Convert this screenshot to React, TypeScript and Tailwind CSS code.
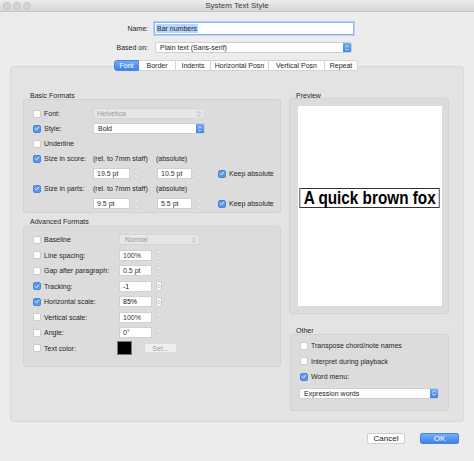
import React from 'react';

const font = "font-['Liberation_Sans',Arial,sans-serif]";

function Check({ on }: { on?: boolean }) {
  if (on) {
    return (
      <span className="shrink-0 w-[8px] h-[8px] rounded-[2px] bg-[#5b97ec] border border-[#4a84d6] flex items-center justify-center">
        <svg viewBox="0 0 8 8" className="w-[7px] h-[7px]">
          <path d="M1.6 4.1 L3.2 5.7 L6.4 2.1" fill="none" stroke="white" strokeWidth="1.2" strokeLinecap="round" strokeLinejoin="round" />
        </svg>
      </span>
    );
  }
  return <span className="shrink-0 w-[8px] h-[8px] rounded-[2px] bg-white border border-[#cbcbcb]" />;
}

function UpDown({ color }: { color: string }) {
  return (
    <svg viewBox="0 0 6 10" className="w-[6px] h-[10px]">
      <path d="M1.6 4 L3 2.6 L4.4 4 M1.6 6 L3 7.4 L4.4 6" fill="none" stroke={color} strokeWidth="0.8" strokeLinecap="round" strokeLinejoin="round" />
    </svg>
  );
}

function Stepper({ strong }: { strong?: boolean }) {
  return (
    <span className={'shrink-0 w-[6px] h-[10px] rounded-[2px] border flex items-center justify-center ' + (strong ? 'bg-white border-[#c9c9c9]' : 'bg-[#e6e6e6] border-[#d6d6d6]')}>
      <UpDown color={strong ? '#555' : '#a5a5a5'} />
    </span>
  );
}

function Select({ text, className, disabled }: { text: string; className: string; disabled?: boolean }) {
  if (disabled) {
    return (
      <div className={'h-[11px] rounded-[2px] bg-[#e6e6e6] border border-[#d5d5d5] flex items-center justify-between pl-[3px] pr-[2px] text-[#9b9b9b] ' + className}>
        <span>{text}</span>
        <UpDown color="#a8a8a8" />
      </div>
    );
  }
  return (
    <div className={'h-[11px] rounded-[2px] bg-white border border-[#cfcfcf] flex items-center justify-between pl-[4px] text-[#222] overflow-hidden ' + className}>
      <span>{text}</span>
      <span className="w-[8px] h-full bg-gradient-to-b from-[#6eaaf8] to-[#3f82ec] flex items-center justify-center">
        <UpDown color="#fff" />
      </span>
    </div>
  );
}

function Spin({ value, className, strong }: { value: string; className: string; strong?: boolean }) {
  return (
    <div className="flex items-center gap-[4px]">
      <div className={'h-[11px] bg-white border border-[#d0d0d0] flex items-center pl-[3px] ' + (strong ? 'text-[#111] ' : 'text-[#333] ') + className}>
        {value}
      </div>
      <Stepper strong={strong} />
    </div>
  );
}

function BasicRow({ on, label, children }: { on?: boolean; label: string; children?: React.ReactNode }) {
  return (
    <div className="flex items-center h-[15px]">
      <div className="w-[60px] flex items-center gap-[3px]">
        <Check on={on} />
        <span>{label}</span>
      </div>
      {children}
    </div>
  );
}

function SizeRow({ a, b }: { a: string; b: string }) {
  return (
    <div className="flex items-center h-[15px]">
      <div className="w-[60px]" />
      <div className="w-[64px]">
        <Spin value={a} className="w-[37px]" />
      </div>
      <div className="w-[61px]">
        <Spin value={b} className="w-[35px]" />
      </div>
      <div className="flex items-center gap-[3px]">
        <Check on />
        <span>Keep absolute</span>
      </div>
    </div>
  );
}

function Notes() {
  return (
    <>
      <div className="w-[63px]">(rel. to 7mm staff)</div>
      <div>(absolute)</div>
    </>
  );
}

function AdvRow({ on, label, children }: { on?: boolean; label: string; children?: React.ReactNode }) {
  return (
    <div className="flex items-center h-[15.5px]">
      <div className="w-[86px] flex items-center gap-[3px]">
        <Check on={on} />
        <span>{label}</span>
      </div>
      {children}
    </div>
  );
}

const tabs = [
  { name: 'Font', w: 'w-[25px]' },
  { name: 'Border', w: 'w-[37px]' },
  { name: 'Indents', w: 'w-[35px]' },
  { name: 'Horizontal Posn', w: 'w-[58px]' },
  { name: 'Vertical Posn', w: 'w-[56px]' },
  { name: 'Repeat', w: 'w-[33px]' },
];

export default function App() {
  return (
    <div className={`w-[474px] h-[461px] bg-[#ececec] flex flex-col overflow-hidden text-[7px] leading-none text-[#262626] ${font}`}>
      {/* title bar */}
      <div className="h-[12px] shrink-0 grid grid-cols-[1fr_auto_1fr] items-center bg-gradient-to-b from-[#ececec] to-[#d8d8d8] border-b border-[#c4c4c4]">
        <div className="flex items-center gap-[2px] pl-[3px]">
          <span className="w-[8px] h-[8px] rounded-full bg-[#d4d4d4] border border-[#c2c2c2]" />
          <span className="w-[8px] h-[8px] rounded-full bg-[#d4d4d4] border border-[#c2c2c2]" />
          <span className="w-[8px] h-[8px] rounded-full bg-[#d4d4d4] border border-[#c2c2c2]" />
        </div>
        <div className="text-[8px] text-[#3a3a3a]">System Text Style</div>
        <div />
      </div>

      {/* name */}
      <div className="mt-[10px] flex items-center h-[13px]">
        <div className="w-[148px] text-right">Name:</div>
        <div className="ml-[6px] w-[200px] h-[13px] bg-white border border-[#8db4ea] shadow-[0_0_0_1px_#b9d3f5] flex items-center pl-[1px]">
          <span className="bg-[#b8d5fb] px-[1px] py-[1px]">Bar numbers</span>
        </div>
      </div>

      {/* based on */}
      <div className="mt-[7px] flex items-center h-[11px]">
        <div className="w-[148px] text-right">Based on:</div>
        <Select text="Plain text (Sans-serif)" className="ml-[7px] w-[197px]" />
      </div>

      {/* tabs */}
      <div className="relative z-10 mt-[7px] ml-[114px] flex h-[11px]">
        {tabs.map((t, i) => (
          <div
            key={t.name}
            className={
              'h-[11px] flex items-center justify-center ' +
              t.w +
              (i === 0
                ? ' rounded-l-[3px] bg-gradient-to-b from-[#6fabf7] to-[#3f82ec] text-white border border-[#4a86e0]'
                : ' bg-white border-y border-r border-[#d3d3d3] text-[#262626]') +
              (i === tabs.length - 1 ? ' rounded-r-[3px]' : '')
            }
          >
            {t.name}
          </div>
        ))}
      </div>

      {/* tab panel */}
      <div className="-mt-[5px] mx-[10px] h-[356px] shrink-0 bg-[#e3e3e3] border border-[#d8d8d8] rounded-[3px] flex gap-[8px] pl-[12px] pt-[25px]">
        {/* left column */}
        <div className="w-[258px] flex flex-col">
          <div className="h-[7px] pl-[7px]">Basic Formats</div>
          <div className="h-[114px] bg-[#dcdcdc] border border-[#d2d2d2] rounded-[3px] pl-[9px] pt-[6px] flex flex-col">
            <BasicRow label="Font:">
              <Select text="Helvetica" className="w-[112px]" disabled />
            </BasicRow>
            <BasicRow on label="Style:">
              <Select text="Bold" className="w-[112px]" />
            </BasicRow>
            <BasicRow label="Underline" />
            <BasicRow on label="Size in score:">
              <Notes />
            </BasicRow>
            <SizeRow a="19.5 pt" b="10.5 pt" />
            <BasicRow on label="Size in parts:">
              <Notes />
            </BasicRow>
            <SizeRow a="9.5 pt" b="5.5 pt" />
          </div>

          <div className="mt-[5px] h-[8px] pl-[7px]">Advanced Formats</div>
          <div className="h-[141px] bg-[#dcdcdc] border border-[#d2d2d2] rounded-[3px] pl-[9px] pt-[5px] flex flex-col">
            <AdvRow label="Baseline">
              <Select text="Normal" className="w-[81px] pl-[5px]" disabled />
            </AdvRow>
            <AdvRow label="Line spacing:">
              <Spin value="100%" className="w-[33px]" />
            </AdvRow>
            <AdvRow label="Gap after paragraph:">
              <Spin value="0.5 pt" className="w-[33px]" />
            </AdvRow>
            <AdvRow on label="Tracking:">
              <Spin value="-1" className="w-[33px]" strong />
            </AdvRow>
            <AdvRow on label="Horizontal scale:">
              <Spin value="85%" className="w-[33px]" strong />
            </AdvRow>
            <AdvRow label="Vertical scale:">
              <Spin value="100%" className="w-[33px]" />
            </AdvRow>
            <AdvRow label="Angle:">
              <Spin value="0°" className="w-[33px]" />
            </AdvRow>
            <AdvRow label="Text color:">
              <div className="-ml-[2px] w-[15px] h-[14px] bg-black border border-[#777]" />
              <div className="ml-[12px] w-[33px] h-[10px] rounded-[2px] bg-[#efefef] border border-[#dadada] flex items-center justify-center text-[#a0a0a0]">
                Set...
              </div>
            </AdvRow>
          </div>
        </div>

        {/* right column */}
        <div className="w-[160px] flex flex-col">
          <div className="h-[6px] pl-[7px]">Preview</div>
          <div className="h-[216px] bg-[#dcdcdc] border border-[#d2d2d2] rounded-[3px] pl-[8px] pt-[7px]">
            <div className="w-[144px] h-[200px] bg-white flex flex-col items-center pt-[82px]">
              <div className="shrink-0 border border-[#333] px-[4px] h-[20px] leading-[19px] text-[18px] font-bold text-black scale-x-[0.85] whitespace-nowrap">
                A quick brown fox
              </div>
            </div>
          </div>

          <div className="mt-[13px] h-[7px] pl-[7px]">Other</div>
          <div className="ml-[1px] w-[159px] h-[77px] bg-[#dcdcdc] border border-[#d2d2d2] rounded-[3px] pl-[9px] pt-[3px] flex flex-col">
            <div className="flex items-center gap-[3px] h-[15.5px]">
              <Check />
              <span>Transpose chord/note names</span>
            </div>
            <div className="flex items-center gap-[3px] h-[15.5px]">
              <Check />
              <span>Interpret during playback</span>
            </div>
            <div className="flex items-center gap-[3px] h-[15.5px]">
              <Check on />
              <span>Word menu:</span>
            </div>
            <Select text="Expression words" className="mt-[3px] -ml-[1px] w-[140px]" />
          </div>
        </div>
      </div>

      {/* buttons */}
      <div className="mt-[11px] flex justify-end gap-[15px] pr-[15px]">
        <div className="w-[38px] h-[11px] rounded-[2px] bg-white border border-[#cfcfcf] flex items-center justify-center text-[8px] text-[#222]">
          Cancel
        </div>
        <div className="w-[39px] h-[11px] rounded-[2px] bg-gradient-to-b from-[#72aef8] to-[#3f82ec] border border-[#4a86e0] flex items-center justify-center text-[8px] text-white">
          OK
        </div>
      </div>
    </div>
  );
}
